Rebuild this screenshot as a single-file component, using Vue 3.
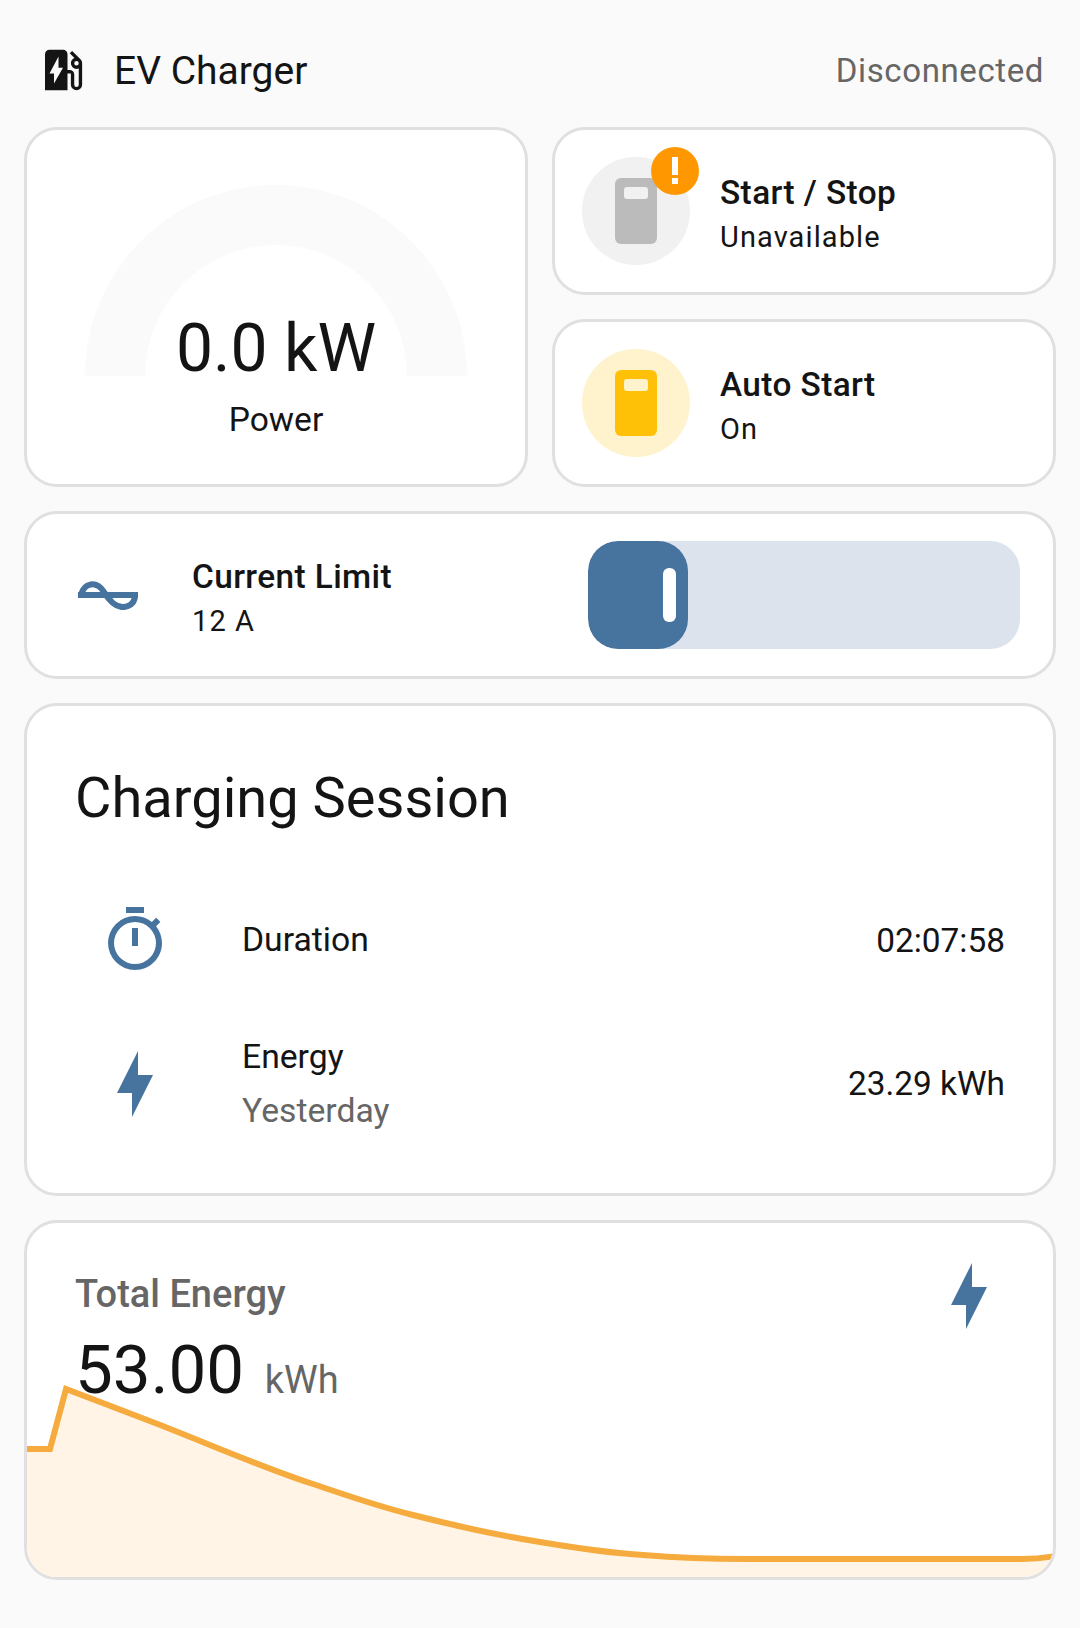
<script setup>
const timerPath = 'M12,20A7,7 0 0,1 5,13A7,7 0 0,1 12,6A7,7 0 0,1 19,13A7,7 0 0,1 12,20M19.03,7.39L20.45,5.97C20,5.46 19.55,5 19.04,4.56L17.62,6C16.07,4.74 14.12,4 12,4A9,9 0 0,0 3,13A9,9 0 0,0 12,22C17,22 21,17.97 21,13C21,10.88 20.26,8.93 19.03,7.39M11,14H13V8H11M15,1H9V3H15V1Z'
const boltPath = 'M11 15H6L13 1V9H18L11 23V15Z'

const tiles = [
  { name: 'Start / Stop', state: 'Unavailable', kind: 'off', warn: true },
  { name: 'Auto Start', state: 'On', kind: 'on', warn: false }
]

const rows = [
  { icon: timerPath, name: 'Duration', value: '02:07:58' },
  { icon: boltPath, name: 'Energy', sub: 'Yesterday', value: '23.29 kWh' }
]

// chart points in card coordinates
const line = 'M0 230 L26 230 L42 170 L131 204 C185 225 235 247 286 264 C322 276 352 287 389 296 C432 307 472 316 516 323 C552 329 585 334 619 336 C655 339 685 340 723 340 L998 340 C1010 340 1020 339 1032 337'
const area = line + ' L1032 366 L0 366 Z'
</script>

<template>
  <div class="page">
    <header class="top">
      <div class="top-left">
        <svg class="top-icon" viewBox="0 0 24 24"><path fill="#141414" d="M19.77,7.23L19.78,7.22L16.06,3.5L15,4.56L17.11,6.67C16.17,7.03 15.5,7.93 15.5,9A2.5,2.5 0 0,0 18,11.5C18.36,11.5 18.69,11.42 19,11.29V18.5A1,1 0 0,1 18,19.5A1,1 0 0,1 17,18.5V14A2,2 0 0,0 15,12H14V5A2,2 0 0,0 12,3H6A2,2 0 0,0 4,5V21H14V13.5H15.5V18.5A2.5,2.5 0 0,0 18,21A2.5,2.5 0 0,0 20.5,18.5V9C20.5,8.31 20.22,7.68 19.77,7.23M18,10A1,1 0 0,1 17,9A1,1 0 0,1 18,8A1,1 0 0,1 19,9A1,1 0 0,1 18,10M8,18V13.5H6L10,6V11H12L8,18Z" /></svg>
        <span class="top-title">EV Charger</span>
      </div>
      <span class="top-status">Disconnected</span>
    </header>

    <section class="grid">
      <div class="card gauge-card">
        <div class="gauge">
          <svg width="382" height="191" viewBox="0 0 382 191"><path fill="#fafafa" d="M0 191A191 191 0 0 1 382 191H322A131 131 0 0 0 60 191Z" /></svg>
          <div class="gauge-value">0.0 kW</div>
        </div>
        <div class="gauge-name">Power</div>
      </div>

      <div class="tiles">
        <div v-for="t in tiles" :key="t.name" class="card tile">
          <div class="tile-icon" :class="t.kind">
            <div class="device"><div class="device-screen"></div></div>
            <div v-if="t.warn" class="badge"><span class="badge-bar"></span><span class="badge-dot"></span></div>
          </div>
          <div class="tile-text">
            <div class="tile-name">{{ t.name }}</div>
            <div class="tile-state">{{ t.state }}</div>
          </div>
        </div>
      </div>

      <div class="card limit wide">
        <svg class="limit-icon" viewBox="0 0 60 30"><path fill="none" stroke="#47749f" stroke-width="6" d="M3 15C6 3 18 0 26 12C32 22 40 30 50 26C55 24 57 20 57 15M0 15H60" /></svg>
        <div class="limit-text tile-text">
          <div class="tile-name">Current Limit</div>
          <div class="tile-state">12 A</div>
        </div>
        <div class="slider">
          <div class="slider-fill"><span class="slider-handle"></span></div>
        </div>
      </div>

      <div class="card session wide">
        <h2 class="session-title">Charging Session</h2>
        <div v-for="r in rows" :key="r.name" class="row">
          <svg class="row-icon" viewBox="0 0 24 24"><path fill="#47749f" :d="r.icon" /></svg>
          <div class="row-text">
            <div class="row-name">{{ r.name }}</div>
            <div v-if="r.sub" class="row-sub">{{ r.sub }}</div>
          </div>
          <div class="row-value">{{ r.value }}</div>
        </div>
      </div>

      <div class="card total wide">
        <svg class="chart" width="1032" height="366" viewBox="0 0 1032 366">
          <path :d="area" fill="#fff4e6" />
          <path :d="line" fill="none" stroke="#f5ab3d" stroke-width="6" />
        </svg>
        <div class="total-head">
          <div>
            <div class="total-name">Total Energy</div>
            <div class="total-value">53.00 <span class="total-unit">kWh</span></div>
          </div>
          <svg class="row-icon total-icon" viewBox="0 0 24 24"><path fill="#47749f" :d="boltPath" /></svg>
        </div>
      </div>
    </section>
  </div>
</template>

<style>
html, body { background: #fafafa; }
</style>

<style scoped>
.page {
  box-sizing: border-box;
  width: 1080px;
  height: 1628px;
  padding: 0 24px;
  background: #fafafa;
  font-family: Roboto, sans-serif;
  color: #141414;
  overflow: hidden;
}

.top {
  display: flex;
  justify-content: space-between;
  align-items: center;
  height: 127px;
  padding: 13px 12px 0 12px;
  box-sizing: border-box;
}
.top-left { display: flex; align-items: center; gap: 24px; }
.top-icon { width: 54px; height: 54px; }
.top-title { font-size: 39px; line-height: 50px; padding-top: 2px; }
.top-status { font-size: 33px; color: #666; letter-spacing: 0.6px; }

.grid {
  display: grid;
  grid-template-columns: 504px 504px;
  gap: 24.5px 24px;
}
.wide { grid-column: 1 / 3; }

.card {
  box-sizing: border-box;
  background: #fff;
  border: 3px solid #e0e0e0;
  border-radius: 33px;
}

.gauge-card {
  height: 359.5px;
  padding-top: 55px;
  display: flex;
  flex-direction: column;
  align-items: center;
}
.gauge { position: relative; width: 382px; height: 191px; }
.gauge svg { display: block; }
.gauge-value {
  position: absolute;
  left: 0;
  right: 0;
  bottom: -12px;
  text-align: center;
  font-size: 66px;
  line-height: 78px;
}
.gauge-name { margin-top: 24px; font-size: 33.6px; line-height: 40px; }

.tiles { display: flex; flex-direction: column; gap: 24.5px; }
.tile {
  height: 167.5px;
  display: flex;
  align-items: center;
  gap: 30px;
  padding-left: 27px;
}
.tile-icon {
  position: relative;
  flex: none;
  width: 108px;
  height: 108px;
  border-radius: 50%;
  display: flex;
  align-items: center;
  justify-content: center;
}
.tile-icon.off { background: #f1f1f1; }
.tile-icon.on { background: #fff3cd; }
.device {
  width: 42px;
  height: 66px;
  border-radius: 6px;
  padding-top: 9px;
  box-sizing: border-box;
  display: flex;
  justify-content: center;
  align-items: flex-start;
}
.off .device { background: #bbb; }
.on .device { background: #ffc107; }
.device-screen { width: 24px; height: 12px; border-radius: 3px; }
.off .device-screen { background: #f1f1f1; }
.on .device-screen { background: #fff3cd; }
.badge {
  position: absolute;
  top: -10px;
  right: -9px;
  width: 48px;
  height: 48px;
  border-radius: 50%;
  background: #ff9800;
  display: flex;
  flex-direction: column;
  align-items: center;
  justify-content: center;
  gap: 3px;
}
.badge-bar { width: 6px; height: 18px; background: #fff; }
.badge-dot { width: 6px; height: 6px; background: #fff; }

.tile-text { padding-top: 8px; }
.tile-name { font-size: 33.4px; font-weight: 500; line-height: 44px; letter-spacing: 0.4px; }
.tile-state { font-size: 29px; line-height: 44px; letter-spacing: 1.1px; }

.limit {
  height: 167.5px;
  display: flex;
  align-items: center;
  padding: 0 33px 0 51px;
}
.limit-icon { flex: none; width: 60px; height: 30px; margin-right: 54px; }
.limit-text { flex: 1; }
.slider {
  flex: none;
  width: 432px;
  height: 108px;
  border-radius: 30px;
  background: #dce3ec;
  overflow: hidden;
}
.slider-fill {
  width: 100px;
  height: 100%;
  background: #47749f;
  border-radius: 30px;
  display: flex;
  align-items: center;
  justify-content: flex-end;
  padding-right: 12px;
  box-sizing: border-box;
}
.slider-handle { width: 13px; height: 54px; border-radius: 6px; background: #fff; }

.session { height: 492.5px; padding: 0 48px 0 48px; }
.session-title {
  margin: 0;
  padding-top: 57px;
  font-size: 56px;
  font-weight: 400;
  line-height: 70px;
  margin-bottom: 65px;
}
.row { display: flex; align-items: center; min-height: 84px; margin-bottom: 47.5px; }
.row-icon { flex: none; width: 72px; height: 72px; }
.row .row-icon { margin: 0 71px 0 24px; }
.row-text { flex: 1; }
.row-name { font-size: 33.7px; line-height: 54px; }
.row-sub { font-size: 33.7px; line-height: 54px; color: #666; }
.row-value { font-size: 33.4px; }

.total { position: relative; height: 359.5px; overflow: hidden; }
.chart { position: absolute; left: -3px; top: -4px; }
.total-head {
  position: relative;
  display: flex;
  justify-content: space-between;
  padding: 47px 48px 0 48px;
}
.total-name { font-size: 38px; font-weight: 500; color: #666; line-height: 48px; }
.total-value { font-size: 67.3px; line-height: 80px; margin-top: 12px; }
.total-unit { font-size: 38px; color: #666; margin-left: 4px; }
.total-icon { margin-top: -10px; }
</style>
